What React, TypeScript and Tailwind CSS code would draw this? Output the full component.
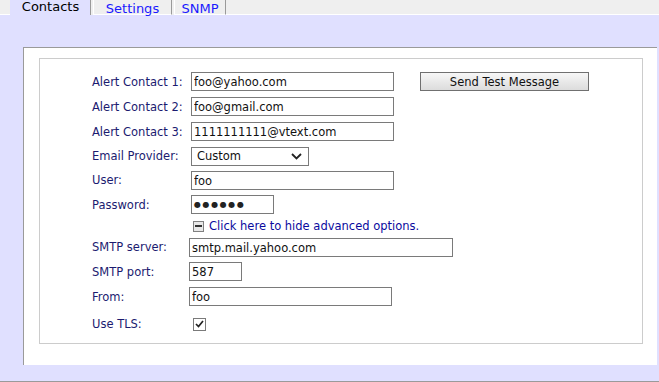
import React from 'react'

const FONT = { fontFamily: '"DejaVu Sans", Verdana, sans-serif' }

function Label({ text, w }: { text: string; w: string }) {
  return <div className={`${w} mt-[2px] shrink-0 text-[11.5px] text-[#1b1b70]`}>{text}</div>
}

function TextBox({ value, w }: { value: string; w: string }) {
  return (
    <input
      type="text"
      defaultValue={value}
      className={`${w} h-[19px] border border-[#7a7a7a] bg-white px-[2px] pt-[1px] text-[11.5px] text-[#111] outline-none`}
      style={FONT}
    />
  )
}

export default function App() {
  return (
    <div className="relative h-[382px] w-[659px] overflow-hidden bg-[#e0e0ff]" style={FONT}>
      {/* tab strip */}
      <div className="flex h-[15px] bg-[#efefef]">
        <div className="w-[10px] border-b border-white" />
        <div className="flex w-[81px] justify-center border-r border-[#9a9a9a] bg-[#e0e0ff] pl-[1px]">
          <span className="text-[13px] leading-[13px] text-black">Contacts</span>
        </div>
        <div className="ml-[2px] flex w-[79px] justify-center border-b border-l border-r border-white border-r-[#9a9a9a] pt-[2px]">
          <span className="text-[13px] leading-[13px] text-[#1a1aff]">Settings</span>
        </div>
        <div className="ml-[2px] flex w-[52px] justify-center border-b border-l border-r border-white border-r-[#9a9a9a] pt-[2px]">
          <span className="text-[13px] leading-[13px] text-[#1a1aff]">SNMP</span>
        </div>
        <div className="flex-1 border-b border-white" />
      </div>

      <div className="h-[32px]" />

      {/* main panel */}
      <div className="ml-[23px] h-[318px] w-[634px] border-l border-t border-[#9a9a9a] bg-white pl-[15px] pt-[10px]">
        <div className="h-[286px] w-[604px] border border-[#cccccc] pl-[52px] pt-[10px]">
          <div className="flex h-[25px] items-center">
            <Label text="Alert Contact 1:" w="w-[99px]" />
            <TextBox value="foo@yahoo.com" w="w-[203px]" />
            <button
              className="ml-[26px] h-[19px] w-[169px] border border-[#707070] bg-gradient-to-b from-[#f7f7f7] to-[#dcdcdc] pt-[1px] text-[11.5px] text-[#111]"
              style={FONT}
            >
              Send Test Message
            </button>
          </div>
          <div className="flex h-[25px] items-center">
            <Label text="Alert Contact 2:" w="w-[99px]" />
            <TextBox value="foo@gmail.com" w="w-[203px]" />
          </div>
          <div className="flex h-[25px] items-center">
            <Label text="Alert Contact 3:" w="w-[99px]" />
            <TextBox value="1111111111@vtext.com" w="w-[203px]" />
          </div>
          <div className="flex h-[24px] items-center">
            <Label text="Email Provider:" w="w-[99px]" />
            <div className="flex h-[19px] w-[118px] items-center justify-between border border-[#7a7a7a] bg-white pl-[5px] pr-[6px]">
              <span className="pt-[1px] text-[11.5px] text-[#111]">Custom</span>
              <svg width="11" height="7" viewBox="0 0 11 7">
                <path d="M1 1 L5.5 5.5 L10 1" fill="none" stroke="#222" strokeWidth="1.8" />
              </svg>
            </div>
          </div>
          <div className="flex h-[24px] items-center">
            <Label text="User:" w="w-[99px]" />
            <TextBox value="foo" w="w-[203px]" />
          </div>
          <div className="flex h-[25px] items-center">
            <Label text="Password:" w="w-[99px]" />
            <div className="flex h-[19px] w-[83px] items-center border border-[#7a7a7a] bg-white pl-[2px]">
              <span className="text-[8px] leading-none tracking-[1.6px] text-[#222]">●●●●●●</span>
            </div>
          </div>
          <div className="flex h-[18px] items-center pl-[101px]">
            <div className="flex h-[11px] w-[11px] items-center justify-center border border-[#808080] bg-[#e8e8e8]">
              <div className="h-[2px] w-[7px] bg-[#333]" />
            </div>
            <span className="ml-[5px] mt-[2px] text-[11.5px] text-[#0a0a9e]">Click here to hide advanced options.</span>
          </div>
          <div className="flex h-[24px] items-center">
            <Label text="SMTP server:" w="w-[97px]" />
            <TextBox value="smtp.mail.yahoo.com" w="w-[264px]" />
          </div>
          <div className="flex h-[25px] items-center">
            <Label text="SMTP port:" w="w-[97px]" />
            <TextBox value="587" w="w-[53px]" />
          </div>
          <div className="flex h-[25px] items-center">
            <Label text="From:" w="w-[97px]" />
            <TextBox value="foo" w="w-[203px]" />
          </div>
          <div className="flex h-[30px] items-center">
            <Label text="Use TLS:" w="w-[101px]" />
            <div className="flex h-[13px] w-[13px] items-center justify-center border border-[#7a7a7a] bg-white">
              <svg width="9" height="8" viewBox="0 0 9 8">
                <path d="M1 4 L3.5 6.5 L8 1" fill="none" stroke="#222" strokeWidth="1.7" />
              </svg>
            </div>
          </div>
        </div>
      </div>

      <div className="absolute bottom-0 left-0 h-px w-full bg-[#9a9a9a]" />
    </div>
  )
}
